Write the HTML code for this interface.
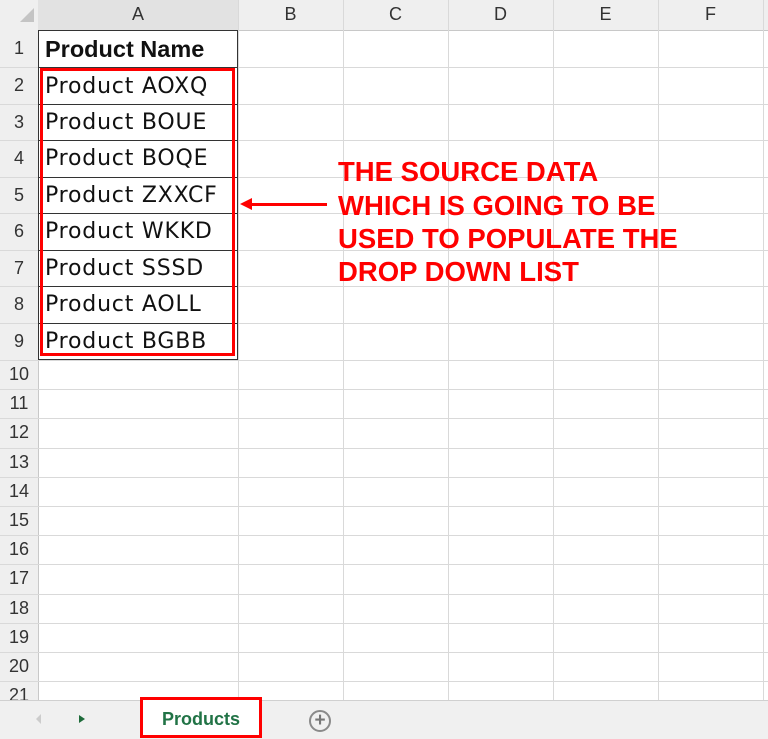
<!DOCTYPE html>
<html><head><style>
body{margin:0;width:768px;height:738px;overflow:hidden;background:#fff;font-family:"Liberation Sans",Arial,sans-serif;position:relative}
.a{position:absolute}
.hl{position:absolute;left:0;width:768px;height:1px;background:#d9d9d9}
.vl{position:absolute;top:0;height:700px;width:1px;background:#d9d9d9}
.ch{position:absolute;top:0;height:30px;line-height:28px;text-align:center;font-size:18px;color:#333}
.rh{position:absolute;left:0;width:38px;text-align:center;font-size:18px;color:#333}
.cell{position:absolute;left:45px;font-family:"DejaVu Sans",sans-serif;font-size:22px;color:#111;letter-spacing:0.8px}
.t{position:absolute;left:338px;color:#f00;font-weight:bold;font-size:27.5px;line-height:33px}
</style></head><body>
<div class="a" style="left:0;top:0;width:768px;height:30px;background:#efefef;border-bottom:1px solid #c8c8c8"></div>
<div class="a" style="left:0;top:0;width:38px;height:700px;background:#efefef;border-right:1px solid #c8c8c8"></div>
<div class="a" style="left:20px;top:8px;width:0;height:0;border-left:14px solid transparent;border-bottom:14px solid #c4c4c4"></div>
<div class="a" style="left:38px;top:0;width:200px;height:30px;background:#e2e2e2"></div>
<div class="ch" style="left:38px;width:200px">A</div>
<div class="ch" style="left:238px;width:105px">B</div>
<div class="ch" style="left:343px;width:105px">C</div>
<div class="ch" style="left:448px;width:105px">D</div>
<div class="ch" style="left:553px;width:105px">E</div>
<div class="ch" style="left:658px;width:105px">F</div>
<div class="vl" style="left:238px"></div><div class="vl" style="left:343px"></div><div class="vl" style="left:448px"></div><div class="vl" style="left:553px"></div><div class="vl" style="left:658px"></div><div class="vl" style="left:763px"></div>
<div id="rows"></div>
<script>
var tops=[30,67,104,140,177,213,250,286,323,360];
for(var i=11;i<=22;i++)tops.push(360+(i-10)*29.2);
var h='';
for(var r=1;r<=21;r++){var t=tops[r-1],b=tops[r];
h+='<div class="hl" style="top:'+Math.round(b)+'px"></div>';
h+='<div class="rh" style="top:'+Math.round(t)+'px;height:'+Math.round(b-t)+'px;line-height:'+Math.round(b-t)+'px">'+r+'</div>';}
document.getElementById('rows').innerHTML=h;
</script>
<div class="a" style="left:38px;top:30px;width:198px;height:328px;border:1px solid #333"></div>
<div class="a" style="left:38px;top:67px;width:200px;height:1px;background:#333"></div>
<div class="a" style="left:38px;top:104px;width:200px;height:1px;background:#333"></div>
<div class="a" style="left:38px;top:140px;width:200px;height:1px;background:#333"></div>
<div class="a" style="left:38px;top:177px;width:200px;height:1px;background:#333"></div>
<div class="a" style="left:38px;top:213px;width:200px;height:1px;background:#333"></div>
<div class="a" style="left:38px;top:250px;width:200px;height:1px;background:#333"></div>
<div class="a" style="left:38px;top:286px;width:200px;height:1px;background:#333"></div>
<div class="a" style="left:38px;top:323px;width:200px;height:1px;background:#333"></div>
<div class="cell" style="top:36px;font-weight:bold;font-family:'Liberation Sans',sans-serif;font-size:23.5px;letter-spacing:0">Product Name</div>
<div class="cell" style="top:74px">Product AOXQ</div>
<div class="cell" style="top:110px">Product BOUE</div>
<div class="cell" style="top:146px">Product BOQE</div>
<div class="cell" style="top:183px">Product ZXXCF</div>
<div class="cell" style="top:219px">Product WKKD</div>
<div class="cell" style="top:256px">Product SSSD</div>
<div class="cell" style="top:292px">Product AOLL</div>
<div class="cell" style="top:329px">Product BGBB</div>
<div class="a" style="left:40px;top:68px;width:189px;height:282px;border:3px solid #f00"></div>
<div class="a" style="left:250px;top:203px;width:77px;height:3px;background:#f00"></div>
<div class="a" style="left:240px;top:198px;width:0;height:0;border-top:6.5px solid transparent;border-bottom:6.5px solid transparent;border-right:12px solid #f00"></div>
<div class="t" style="top:155px">THE SOURCE DATA</div>
<div class="t" style="top:189px">WHICH IS GOING TO BE</div>
<div class="t" style="top:222px">USED TO POPULATE THE</div>
<div class="t" style="top:255px">DROP DOWN LIST</div>
<div class="a" style="left:0;top:700px;width:768px;height:38px;background:#f0f0f0;border-top:1px solid #d0d0d0"></div>
<div class="a" style="left:36px;top:714px;width:0;height:0;border-top:5px solid transparent;border-bottom:5px solid transparent;border-right:5px solid #ccc"></div>
<div class="a" style="left:79px;top:715px;width:0;height:0;border-top:4px solid transparent;border-bottom:4px solid transparent;border-left:6px solid #1e6b3a"></div>
<div class="a" style="left:140px;top:697px;width:116px;height:35px;background:#fff;border:3px solid #f00"></div>
<div class="a" style="left:143px;top:709px;width:116px;text-align:center;color:#217346;font-weight:bold;font-size:18px">Products</div>
<div class="a" style="left:309px;top:710px;width:18px;height:18px;border:2px solid #8a8a8a;border-radius:50%;text-align:center;line-height:18px;color:#777;font-size:19px;font-weight:bold">+</div>
</body></html>
